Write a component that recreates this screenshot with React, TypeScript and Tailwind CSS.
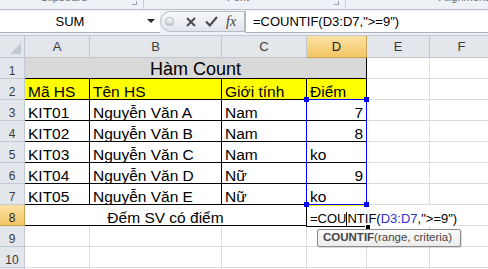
import React from 'react';

type Student = { id: string; name: string; gender: string; score: string };

const students: Student[] = [
  { id: 'KIT01', name: 'Nguyễn Văn A', gender: 'Nam', score: '7' },
  { id: 'KIT02', name: 'Nguyễn Văn B', gender: 'Nam', score: '8' },
  { id: 'KIT03', name: 'Nguyễn Văn C', gender: 'Nam', score: 'ko' },
  { id: 'KIT04', name: 'Nguyễn Văn D', gender: 'Nữ', score: '9' },
  { id: 'KIT05', name: 'Nguyễn Văn E', gender: 'Nữ', score: 'ko' },
];

const columns = ['A', 'B', 'C', 'D', 'E', 'F'];

// header cell for the row numbers on the left
const RowHead = ({ n, active }: { n: number; active?: boolean }) => (
  <div
    className={`h-[21px] flex items-end justify-center leading-[14px] text-[12px] border-r border-b ${
      active
        ? 'bg-linear-to-b from-[#fbe2a3] to-[#f3c563] border-[#c9a352] text-[#1f1f1f]'
        : 'bg-[#e3e6ea] border-[#c3cad3] text-[#3b3b3b]'
    }`}
  >
    {n}
  </div>
);

type CellProps = {
  children?: React.ReactNode;
  className?: string;
  right?: boolean;
  dark?: boolean;
};

const Cell = ({ children, className = '', right = false, dark = false }: CellProps) => (
  <div
    className={`h-[21px] flex items-end px-[3px] text-[15.5px] leading-[15px] text-black whitespace-nowrap overflow-hidden border-r border-b ${
      right ? 'justify-end' : ''
    } ${dark ? 'border-black' : 'border-[#dadcdd]'} ${className}`}
  >
    {children}
  </div>
);

const App: React.FC = () => {
  return (
    <div className="relative w-[488px] h-[269px] overflow-hidden bg-white font-['Liberation_Sans',Arial,sans-serif]">
      {/* Ribbon group labels (cut off at the top) */}
      <div className="h-[10px] flex bg-[#eef1f5] border-b border-[#b9c0c9] overflow-hidden text-[11px] text-[#6a6a6a]">
        <div className="relative w-[150px] border-r border-[#c9cfd7] pl-[40px]">
          <span className="block -mt-[9px] leading-[13px]">Clipboard</span>
          <span className="absolute right-[6px] top-[1px] w-[5px] h-[4px] border-r border-b border-[#9aa2ad]" />
        </div>
        <div className="relative w-[209px] border-r border-[#c9cfd7] pl-[83px]">
          <span className="block -mt-[9px] leading-[13px]">Font</span>
          <span className="absolute right-[6px] top-[1px] w-[5px] h-[4px] border-r border-b border-[#9aa2ad]" />
        </div>
        <div className="flex-1 pl-[93px]">
          <span className="block -mt-[9px] leading-[13px]">Alignment</span>
        </div>
      </div>

      {/* Formula bar */}
      <div className="h-[26px] flex items-start pt-[1px] bg-[#eef1f5] border-b border-[#c2c8d0]">
        <div className="w-[160px] h-[22px] flex items-center bg-white border-b border-[#aab1ba]">
          <span className="w-[140px] text-center text-[13px] text-black">SUM</span>
          <svg width="8" height="5" viewBox="0 0 8 5" className="ml-[7px]">
            <path d="M0 0 H8 L4 4 Z" fill="#2b2b2b" />
          </svg>
        </div>
        <div className="w-[85px] h-[21px] flex items-center rounded-l-[11px] bg-linear-to-b from-[#f7f8fa] to-[#e1e5ea] border border-[#b7bec7]">
          <span className="ml-[4px] w-[9px] h-[9px] rounded-full bg-linear-to-b from-[#fdfdfd] to-[#c7ccd3] border border-[#a9b0b9]" />
          <svg width="10" height="10" viewBox="0 0 10 10" className="ml-[12px]">
            <path d="M1 1 L9 9 M9 1 L1 9" stroke="#474747" strokeWidth="1.8" />
          </svg>
          <svg width="13" height="11" viewBox="0 0 13 11" className="ml-[9px]">
            <path d="M1 5.5 L4.8 9.5 L12 1" stroke="#474747" strokeWidth="2" fill="none" />
          </svg>
          <span className="ml-[8px] text-[14px] italic font-['Liberation_Serif',serif] text-[#3d3d3d] leading-none">
            fx
          </span>
        </div>
        <div className="flex-1 h-[22px] flex items-center bg-white border-l border-b border-[#aab1ba] pl-[7px] text-[13px] text-black">
          =COUNTIF(D3:D7,"&gt;=9")
        </div>
      </div>

      {/* Sheet grid */}
      <div className="grid grid-cols-[25px_65px_132px_85px_60px_63px_64px]">
        {/* column headers */}
        <div className="h-[22px] bg-[#e3e6ea] border-r border-b border-[#bfc6cf] flex items-end justify-end p-[2px]">
          <svg width="12" height="12" viewBox="0 0 12 12">
            <path d="M11 0 V11 H0 Z" fill="#c3c9d1" />
          </svg>
        </div>
        {columns.map((c) => (
          <div
            key={c}
            className={`h-[22px] flex items-center justify-center text-[13px] border-r border-b ${
              c === 'D'
                ? 'bg-linear-to-b from-[#fbe2a3] to-[#f3c563] border-[#c9a352] text-[#1f1f1f]'
                : 'bg-[#e3e6ea] border-[#bfc6cf] text-[#3b3b3b]'
            }`}
          >
            {c}
          </div>
        ))}

        {/* row 1 */}
        <RowHead n={1} />
        <div className="col-span-4 h-[21px] flex items-end justify-center bg-[#d9d9d9] border-r border-b border-black text-[18px] leading-[18px] text-black">
          Hàm Count
        </div>
        <Cell />
        <Cell />

        {/* row 2 */}
        <RowHead n={2} />
        <Cell dark className="bg-[#ffff00]">Mã HS</Cell>
        <Cell dark className="bg-[#ffff00]">Tên HS</Cell>
        <Cell dark className="bg-[#ffff00]">Giới tính</Cell>
        <Cell dark className="bg-[#ffff00]">Điểm</Cell>
        <Cell />
        <Cell />

        {/* rows 3-7 */}
        {students.map((s, i) => (
          <React.Fragment key={s.id}>
            <RowHead n={i + 3} />
            <Cell dark>{s.id}</Cell>
            <Cell dark>{s.name}</Cell>
            <Cell dark>{s.gender}</Cell>
            <Cell dark right={s.score !== 'ko'}>
              {s.score}
            </Cell>
            <Cell />
            <Cell />
          </React.Fragment>
        ))}

        {/* row 8 */}
        <RowHead n={8} active />
        <div className="col-span-3 h-[21px] flex items-end justify-center border-r border-b border-black text-[15.5px] leading-[15px] text-black">
          Đếm SV có điểm
        </div>
        <Cell dark />
        <Cell />
        <Cell />

        {/* rows 9-11 */}
        {[9, 10, 11].map((n) => (
          <React.Fragment key={n}>
            <RowHead n={n} />
            <Cell />
            <Cell />
            <Cell />
            <Cell />
            <Cell />
            <Cell />
          </React.Fragment>
        ))}
      </div>

      {/* in-cell editor for D8 */}
      <div className="absolute left-[306px] top-[204px] w-[62px] h-[23px] border-l border-b border-black" />
      <div className="absolute left-[307px] top-[205px] w-[151px] h-[21px] bg-white flex items-end pb-[1px] pl-[3px] text-[13px] leading-[13px] text-black whitespace-nowrap">
        <span>=COU</span>
        <span className="w-[1px] h-[14px] bg-black mb-[-1px]" />
        <span>NTIF(</span>
        <span className="text-[#3232d2]">D3:D7</span>
        <span>,"&gt;=9")</span>
      </div>
      <div className="absolute left-[365px] top-[224px] w-[6px] h-[6px] bg-black border border-white" />

      {/* range highlight D3:D7 */}
      <div className="absolute left-[306px] top-[99px] w-[61px] h-[106px] border border-[#0000ff]" />
      <div className="absolute left-[307px] top-[205px] w-[60px] h-[1px] bg-[#ffff00]" />
      <div className="absolute left-[304px] top-[97px] w-[5px] h-[5px] bg-[#0000ff]" />
      <div className="absolute left-[364px] top-[97px] w-[5px] h-[5px] bg-[#0000ff]" />
      <div className="absolute left-[304px] top-[202px] w-[5px] h-[5px] bg-[#0000ff]" />
      <div className="absolute left-[364px] top-[202px] w-[5px] h-[5px] bg-[#0000ff]" />

      {/* function tooltip */}
      <div className="absolute left-[317px] top-[229px] w-[144px] h-[18px] flex items-center pl-[5px] rounded-[2px] border border-[#8a8a8a] bg-linear-to-b from-[#fafafa] to-[#ececec] shadow-[1px_1px_1px_rgba(0,0,0,0.15)] text-[11.5px] text-[#454545] whitespace-nowrap">
        <span className="font-bold">COUNTIF</span>
        <span>(range, criteria)</span>
      </div>
    </div>
  );
};

export default App;
